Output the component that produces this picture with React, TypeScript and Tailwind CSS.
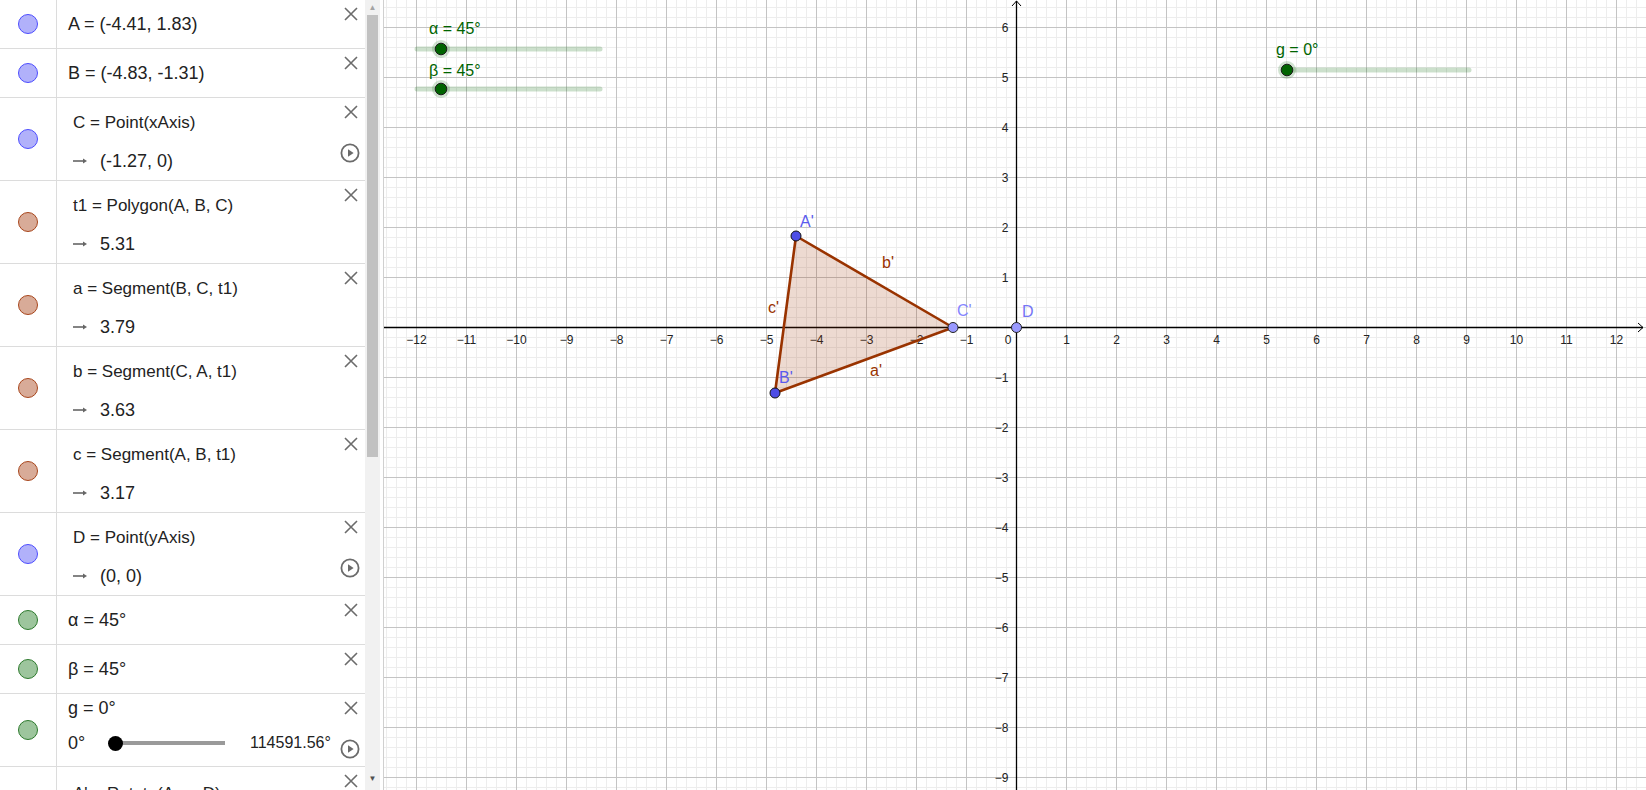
import React from 'react';

// graphics view geometry (local to the svg)
const W = 1262;
const H = 790;
const OX = 632.5;
const OY = 327.5;
const U = 50;

const px = (x: number) => OX + x * U;
const py = (y: number) => OY - y * U;

const dotClass = {
  blue: 'bg-[#b1b1fa] border-[#4d4dff]',
  brown: 'bg-[#d8ab98] border-[#a8461c]',
  green: 'bg-[#9dc59d] border-[#2d7a2d]',
};

const CloseX = () => (
  <svg className="absolute right-[7px] top-[7px] h-[14px] w-[14px]" viewBox="0 0 14 14">
    <path d="M1 1 L13 13 M13 1 L1 13" stroke="#6b6b6b" strokeWidth="1.6" fill="none" />
  </svg>
);

const Play = () => (
  <svg className="absolute right-[5px] top-[45px] h-[20px] w-[20px]" viewBox="0 0 20 20">
    <circle cx="10" cy="10" r="8.6" stroke="#6b6b6b" strokeWidth="1.8" fill="none" />
    <path d="M8 6.2 L13.6 10 L8 13.8 Z" fill="#6b6b6b" />
  </svg>
);

const Arrow = () => (
  <svg className="mr-[13px] h-[8px] w-[14px] shrink-0" viewBox="0 0 14 8">
    <path d="M0 4 L11 4" stroke="#666" strokeWidth="1.6" />
    <path d="M10 1.5 L14 4 L10 6.5 Z" fill="#666" />
  </svg>
);

const Row = ({
  dot,
  height,
  play,
  children,
}: {
  dot: 'blue' | 'brown' | 'green';
  height: string;
  play?: boolean;
  children: React.ReactNode;
}) => (
  <div className={`flex shrink-0 border-b border-[#dcdcdc] ${height}`}>
    <div className="flex w-[57px] shrink-0 items-center justify-center border-r border-[#dcdcdc]">
      <span className={`h-5 w-5 rounded-full border ${dotClass[dot]}`} />
    </div>
    <div className="relative flex-1">
      {children}
      <CloseX />
      {play && <Play />}
    </div>
  </div>
);

const Single = ({ text }: { text: string }) => (
  <div className="flex h-full items-center pl-[11px] text-[18px]">{text}</div>
);

const Double = ({ def, value }: { def: string; value: string }) => (
  <div className="pl-[16px] text-[17px]">
    <div className="flex h-[50px] items-center">{def}</div>
    <div className="flex h-[26px] items-center">
      <Arrow />
      <span className="text-[18px]">{value}</span>
    </div>
  </div>
);

const AlgebraView = () => (
  <div className="flex h-[790px] w-[383px] shrink-0 bg-white">
    <div className="flex w-[365px] flex-col overflow-hidden text-[#222]">
      <Row dot="blue" height="h-[49px]">
        <Single text="A = (-4.41, 1.83)" />
      </Row>
      <Row dot="blue" height="h-[49px]">
        <Single text="B = (-4.83, -1.31)" />
      </Row>
      <Row dot="blue" height="h-[83px]" play>
        <Double def="C = Point(xAxis)" value="(-1.27, 0)" />
      </Row>
      <Row dot="brown" height="h-[83px]">
        <Double def="t1 = Polygon(A, B, C)" value="5.31" />
      </Row>
      <Row dot="brown" height="h-[83px]">
        <Double def="a = Segment(B, C, t1)" value="3.79" />
      </Row>
      <Row dot="brown" height="h-[83px]">
        <Double def="b = Segment(C, A, t1)" value="3.63" />
      </Row>
      <Row dot="brown" height="h-[83px]">
        <Double def="c = Segment(A, B, t1)" value="3.17" />
      </Row>
      <Row dot="blue" height="h-[83px]" play>
        <Double def="D = Point(yAxis)" value="(0, 0)" />
      </Row>
      <Row dot="green" height="h-[49px]">
        <Single text="α = 45°" />
      </Row>
      <Row dot="green" height="h-[49px]">
        <Single text="β = 45°" />
      </Row>
      <Row dot="green" height="h-[73px]" play>
        <div className="pl-[11px] text-[18px]">
          <div className="flex h-[28px] items-center">g = 0°</div>
          <div className="flex h-[42px] items-center">
            <span className="w-[40px]">0°</span>
            <div className="relative h-[15px] w-[117px]">
              <div className="absolute left-[7px] right-0 top-[5.5px] h-[4px] bg-[#9a9a9a]" />
              <div className="absolute left-0 top-0 h-[15px] w-[15px] rounded-full bg-black" />
            </div>
            <span className="ml-[25px] text-[16px]">114591.56°</span>
          </div>
        </div>
      </Row>
      <Row dot="blue" height="h-[83px]">
        <div className="pl-[16px] pt-[17px] text-[17px] leading-[20px]">A' = Rotate(A, α, D)</div>
      </Row>
    </div>
    {/* scrollbar */}
    <div className="flex w-[15px] shrink-0 flex-col items-center bg-[#f1f1f1]">
      <span className="mt-[3px] h-[10px] text-[8px] leading-[10px] text-[#a3a3a3]">▲</span>
      <div className="mt-[2px] h-[442px] w-[11px] bg-[#c1c1c1]" />
      <div className="flex-1" />
      <span className="mb-[6px] h-[10px] text-[8px] leading-[10px] text-[#505050]">▼</span>
    </div>
    <div className="w-[3px] shrink-0" />
  </div>
);

const Slider = ({ x1, x2, y, knob }: { x1: number; x2: number; y: number; knob: number }) => (
  <g>
    <line x1={x1} y1={y} x2={x2} y2={y} stroke="#006400" strokeOpacity="0.2" strokeWidth="5" strokeLinecap="round" />
    <circle cx={knob} cy={y} r="9" fill="#006400" fillOpacity="0.18" />
    <circle cx={knob} cy={y} r="5.8" fill="#006400" stroke="#1b1b1b" strokeWidth="1" />
  </g>
);

const GraphicsView = () => {
  const minor: number[] = [];
  const major: number[] = [];
  for (let x = OX % 10; x < W; x += 10) {
    if (Math.abs(((x - OX) / U) % 1) < 0.001) major.push(x);
    else minor.push(x);
  }
  const minorY: number[] = [];
  const majorY: number[] = [];
  for (let y = OY % 10; y < H; y += 10) {
    if (Math.abs(((y - OY) / U) % 1) < 0.001) majorY.push(y);
    else minorY.push(y);
  }
  const xTicks = Array.from({ length: 25 }, (_, i) => i - 12).filter((k) => k !== 0);
  const yTicks = Array.from({ length: 16 }, (_, i) => 6 - i).filter((k) => k !== 0);
  const fmt = (k: number) => (k < 0 ? `\u2212${-k}` : `${k}`);

  const A = { x: px(-4.41), y: py(1.83) };
  const B = { x: px(-4.83), y: py(-1.31) };
  const C = { x: px(-1.27), y: py(0) };
  const D = { x: px(0), y: py(0) };

  return (
    <div className="relative h-[790px] flex-1 border-l border-[#d0d0d0] bg-white">
      <svg width={W} height={H} className="block" style={{ fontFamily: '"Liberation Sans", Arial, sans-serif' }}>
        {minor.map((x) => (
          <line key={`mx${x}`} x1={x} y1={0} x2={x} y2={H} stroke="#ededed" strokeWidth="1" />
        ))}
        {minorY.map((y) => (
          <line key={`my${y}`} x1={0} y1={y} x2={W} y2={y} stroke="#ededed" strokeWidth="1" />
        ))}
        {major.map((x) => (
          <line key={`Mx${x}`} x1={x} y1={0} x2={x} y2={H} stroke="#c4c4c4" strokeWidth="1" />
        ))}
        {majorY.map((y) => (
          <line key={`My${y}`} x1={0} y1={y} x2={W} y2={y} stroke="#c4c4c4" strokeWidth="1" />
        ))}

        {/* axes */}
        <line x1={0} y1={OY} x2={W - 3} y2={OY} stroke="#000" strokeWidth="1.3" />
        <line x1={OX} y1={1} x2={OX} y2={H} stroke="#000" strokeWidth="1.3" />
        <path d={`M${W - 8} ${OY - 4.5} L${W - 3} ${OY} L${W - 8} ${OY + 4.5}`} stroke="#000" fill="none" strokeWidth="1" />
        <path d={`M${OX - 4.5} 6 L${OX} 1 L${OX + 4.5} 6`} stroke="#000" fill="none" strokeWidth="1" />

        <g fontSize="12" fill="#222">
          {xTicks.map((k) => (
            <text key={`xt${k}`} x={px(k)} y={343.5} textAnchor="middle">
              {fmt(k)}
            </text>
          ))}
          <text x={OX - 5} y={343.5} textAnchor="end">
            0
          </text>
          {yTicks.map((k) => (
            <text key={`yt${k}`} x={OX - 8} y={py(k) + 4.3} textAnchor="end">
              {fmt(k)}
            </text>
          ))}
        </g>

        {/* triangle */}
        <polygon
          points={`${A.x},${A.y} ${B.x},${B.y} ${C.x},${C.y}`}
          fill="#993300"
          fillOpacity="0.18"
          stroke="#993300"
          strokeWidth="2.6"
          strokeLinejoin="round"
        />
        <g fontSize="16" fill="#993300">
          <text x={498} y={268}>b'</text>
          <text x={384} y={313}>c'</text>
          <text x={486} y={376}>a'</text>
        </g>

        {/* points */}
        <circle cx={A.x} cy={A.y} r="5" fill="#4d4de6" stroke="#111" strokeWidth="1" />
        <circle cx={B.x} cy={B.y} r="5" fill="#4d4de6" stroke="#111" strokeWidth="1" />
        <circle cx={C.x} cy={C.y} r="5" fill="#9999ff" stroke="#222" strokeWidth="1" />
        <circle cx={D.x} cy={D.y} r="5" fill="#9999ff" stroke="#222" strokeWidth="1" />
        <g fontSize="16">
          <text x={416} y={227} fill="#5a5aee">A'</text>
          <text x={395} y={383} fill="#5a5aee">B'</text>
          <text x={573} y={316} fill="#8585ff">C'</text>
          <text x={638} y={317} fill="#7575f5">D</text>
        </g>

        {/* sliders */}
        <g fontSize="16" fill="#006400">
          <text x={45} y={34}>α = 45°</text>
          <text x={45} y={76}>β = 45°</text>
          <text x={892} y={55}>g = 0°</text>
        </g>
        <Slider x1={33} x2={216} y={49} knob={57} />
        <Slider x1={33} x2={216} y={89} knob={57} />
        <Slider x1={903} x2={1085} y={70} knob={903} />
      </svg>
    </div>
  );
};

export default function App() {
  return (
    <div className="flex h-[790px] w-[1646px] overflow-hidden bg-white font-['Liberation_Sans',Arial,sans-serif]">
      <AlgebraView />
      <GraphicsView />
    </div>
  );
}
